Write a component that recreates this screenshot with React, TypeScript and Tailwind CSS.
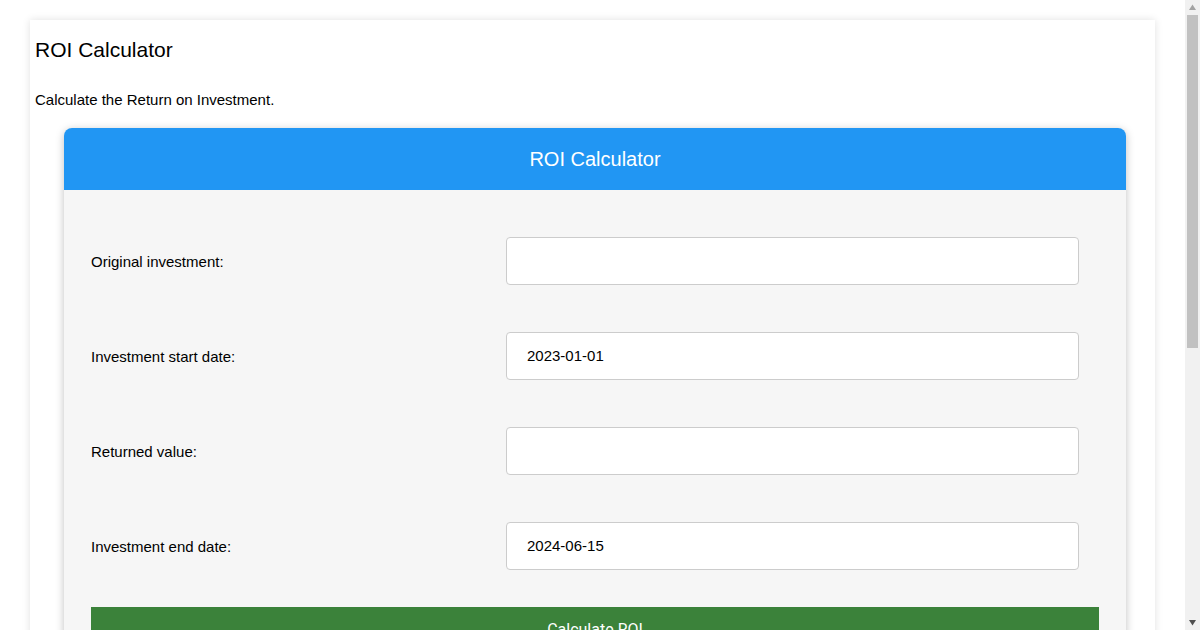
import { useState } from "react";

const fields = [
  { id: "original", label: "Original investment:", value: "" },
  { id: "start", label: "Investment start date:", value: "2023-01-01" },
  { id: "returned", label: "Returned value:", value: "" },
  { id: "end", label: "Investment end date:", value: "2024-06-15" },
];

// window scrollbar, drawn since the screenshot browser hides native ones
function Scrollbar() {
  return (
    <div className="flex w-[15px] shrink-0 flex-col items-center bg-[#f1f1f1]">
      <svg width="15" height="15" viewBox="0 0 15 15" className="shrink-0">
        <path d="M4 10h7L7.5 4.5z" fill="#a3a3a3" />
      </svg>
      <div className="h-[333px] w-[11px] bg-[#c1c1c1]" />
      <div className="flex-1" />
      <svg width="15" height="15" viewBox="0 0 15 15" className="shrink-0">
        <path d="M4 5h7l-3.5 5.5z" fill="#505050" />
      </svg>
    </div>
  );
}

export default function App() {
  const [values, setValues] = useState<Record<string, string>>(
    Object.fromEntries(fields.map((f) => [f.id, f.value])),
  );

  return (
    <div className="flex h-screen overflow-hidden bg-white font-['Liberation_Sans',Arial,sans-serif] text-black">
      <div className="min-w-0 flex-1 overflow-hidden pt-5">
        <div className="mx-[30px] bg-white px-[5px] pb-10 shadow-[0_0_8px_rgba(0,0,0,0.12)]">
          <h1 className="pt-[17px] text-[21px] leading-[26px]">ROI Calculator</h1>
          <p className="mt-[28px] text-[15px] leading-[18px]">Calculate the Return on Investment.</p>

          <div className="ml-[29px] mt-[19px] w-[1062px] overflow-hidden rounded-lg bg-[#f6f6f6] shadow-[0_2px_8px_rgba(0,0,0,0.25)]">
            <div className="flex h-[62px] items-center justify-center bg-[#2196f3] text-[20px] text-white">
              ROI Calculator
            </div>
            <form className="px-[27px] pt-[23px] pb-10" onSubmit={(event) => event.preventDefault()}>
              {fields.map((field) => (
                <div key={field.id} className="flex items-center py-[23.5px]">
                  <label htmlFor={field.id} className="w-[415px] pt-1 text-[15px]">
                    {field.label}
                  </label>
                  <input
                    id={field.id}
                    value={values[field.id]}
                    onChange={(event) => setValues({ ...values, [field.id]: event.target.value })}
                    className="h-12 w-[573px] rounded border border-[#cccccc] bg-white px-5 text-[15px] outline-none"
                  />
                </div>
              ))}
              <button
                type="submit"
                className="mt-[14px] h-[46px] w-full bg-[#3b823a] font-['Roboto',sans-serif] text-[16px] text-white"
              >
                Calculate ROI
              </button>
            </form>
          </div>
        </div>
      </div>
      <Scrollbar />
    </div>
  );
}
